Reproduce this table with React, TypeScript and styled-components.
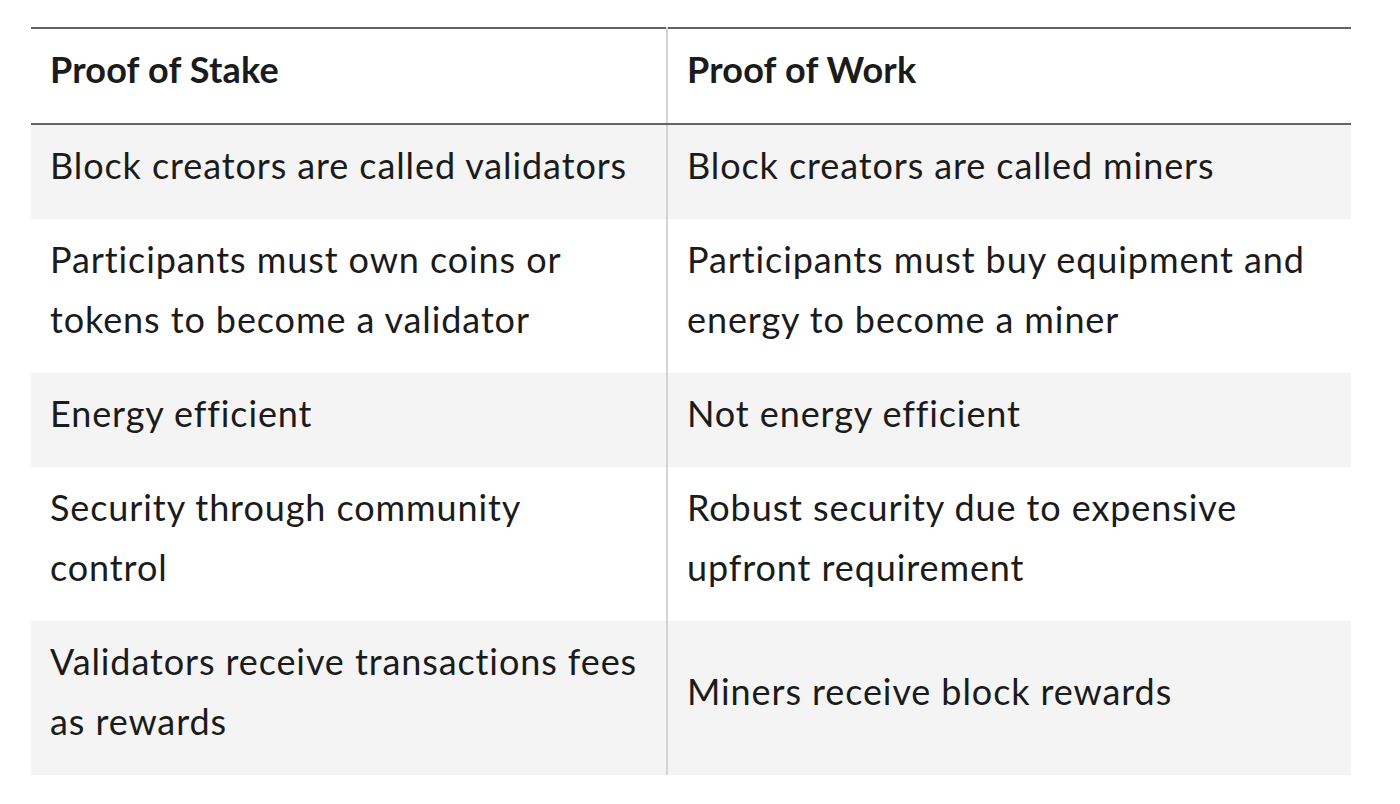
import React from "react";
import styled, { createGlobalStyle } from "styled-components";

const Global = createGlobalStyle`
  html, body { margin: 0; padding: 0; background: #ffffff; }
  body { font-family: Lato, "Noto Sans", sans-serif; color: #1b1b1b; }
`;

const Page = styled.div`
  padding: 27px 0 0 31px;
`;

const Table = styled.table`
  width: 1320px;
  border-collapse: collapse;
  table-layout: fixed;
  border-top: 2px solid #636363;
  font-size: 36px;
  line-height: 60px;
`;

const HeadCell = styled.th<{ $divider?: boolean }>`
  text-align: left;
  font-weight: 700;
  padding: 10px 19px 24px;
  border-bottom: 2px solid #636363;
  border-left: ${(p) => (p.$divider ? "2px solid #d3d3d3" : "none")};
  letter-spacing: 0.2px;
`;

const Row = styled.tr<{ $shaded: boolean }>`
  background: ${(p) => (p.$shaded ? "#f4f4f4" : "#ffffff")};
`;

const Cell = styled.td<{ $divider?: boolean }>`
  padding: 10px 19px 24px;
  vertical-align: middle;
  border-left: ${(p) => (p.$divider ? "2px solid #d3d3d3" : "none")};
  letter-spacing: 0.9px;
  white-space: nowrap;
`;

const rows: [string[], string[]][] = [
  [["Block creators are called validators"], ["Block creators are called miners"]],
  [
    ["Participants must own coins or", "tokens to become a validator"],
    ["Participants must buy equipment and", "energy to become a miner"],
  ],
  [["Energy efficient"], ["Not energy efficient"]],
  [
    ["Security through community", "control"],
    ["Robust security due to expensive", "upfront requirement"],
  ],
  [["Validators receive transactions fees", "as rewards"], ["Miners receive block rewards"]],
];

const Lines = ({ lines }: { lines: string[] }) => (
  <>
    {lines.map((l, i) => (
      <React.Fragment key={i}>
        {i > 0 && <br />}
        {l}
      </React.Fragment>
    ))}
  </>
);

export default function App() {
  return (
    <Page>
      <Global />
      <Table>
        <colgroup>
          <col style={{ width: 636 }} />
          <col style={{ width: 684 }} />
        </colgroup>
        <thead>
          <tr>
            <HeadCell>Proof of Stake</HeadCell>
            <HeadCell $divider>Proof of Work</HeadCell>
          </tr>
        </thead>
        <tbody>
          {rows.map(([a, b], i) => (
            <Row key={i} $shaded={i % 2 === 0}>
              <Cell>
                <Lines lines={a} />
              </Cell>
              <Cell $divider>
                <Lines lines={b} />
              </Cell>
            </Row>
          ))}
        </tbody>
      </Table>
    </Page>
  );
}
